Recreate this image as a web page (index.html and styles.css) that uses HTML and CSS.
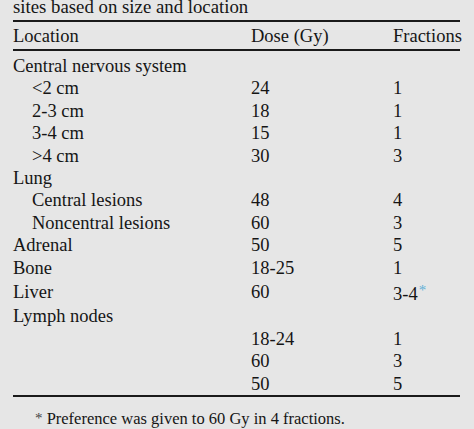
FILE: index.html
```html
<!DOCTYPE html>
<html>
<head>
<meta charset="utf-8">
<link rel="stylesheet" href="styles.css">
</head>
<body>
<div class="page">
  <div class="caption">sites based on size and location</div>
  <table class="tbl">
    <colgroup><col class="w1"><col class="w2"><col class="w3"></colgroup>
    <thead>
      <tr><th>Location</th><th>Dose (Gy)</th><th>Fractions</th></tr>
    </thead>
    <tbody>
      <tr class="first"><td>Central nervous system</td><td></td><td></td></tr>
      <tr><td class="ind">&lt;2 cm</td><td>24</td><td>1</td></tr>
      <tr><td class="ind">2-3 cm</td><td>18</td><td>1</td></tr>
      <tr><td class="ind">3-4 cm</td><td>15</td><td>1</td></tr>
      <tr><td class="ind">&gt;4 cm</td><td>30</td><td>3</td></tr>
      <tr><td>Lung</td><td></td><td></td></tr>
      <tr><td class="ind">Central lesions</td><td>48</td><td>4</td></tr>
      <tr><td class="ind">Noncentral lesions</td><td>60</td><td>3</td></tr>
      <tr><td>Adrenal</td><td>50</td><td>5</td></tr>
      <tr><td>Bone</td><td>18-25</td><td>1</td></tr>
      <tr><td>Liver</td><td>60</td><td>3-4<span class="star">*</span></td></tr>
      <tr><td>Lymph nodes</td><td></td><td></td></tr>
      <tr><td></td><td>18-24</td><td>1</td></tr>
      <tr><td></td><td>60</td><td>3</td></tr>
      <tr class="last"><td></td><td>50</td><td>5</td></tr>
    </tbody>
  </table>
  <div class="foot"><span class="fstar">*</span> Preference was given to 60 Gy in 4 fractions.</div>
</div>
</body>
</html>
```
FILE: styles.css
```css
html, body {
  margin: 0;
  padding: 0;
  background: #e6e6e6;
}
body {
  width: 474px;
  height: 429px;
  overflow: hidden;
  color: #151515;
}
.page, .caption, .tbl, .tbl th, .tbl td, .foot {
  font-family: "Liberation Serif", "Times New Roman", serif;
}
.page {
  padding: 0 14px 0 13px;
  font-size: 18.5px;
}
.caption {
  font-size: 18.8px;
  line-height: 18px;
  margin-top: -2px;
  height: 22px;
  white-space: nowrap;
}
.tbl {
  width: 447px;
  table-layout: fixed;
  border-collapse: collapse;
  border-top: 2px solid #1a1a1a;
  border-bottom: 2px solid #1a1a1a;
  font-size: 18.5px;
}
.w1 { width: 238px; }
.w2 { width: 142px; }
.w3 { width: 67px; }
.tbl th {
  font-weight: normal;
  text-align: left;
  padding: 4px 0 3px 0;
  height: 20px;
  line-height: 20px;
  font-size: 18.5px;
  border-bottom: 2px solid #1a1a1a;
  white-space: nowrap;
}
.tbl td {
  padding: 0;
  line-height: 22.4px;
  height: 22.4px;
  font-size: 18.5px;
  white-space: nowrap;
}
.tbl tr.first td { padding-top: 4px; }
.tbl tr.last td { padding-bottom: 0; }
.tbl td.ind { padding-left: 19px; }
.star {
  color: #62b0d6;
  font-size: 15px;
  vertical-align: 5px;
  margin-left: 1px;
}
.foot {
  font-size: 16.5px;
  padding: 12px 0 0 22px;
  line-height: 18px;
  white-space: nowrap;
}
.fstar {
  color: #444;
  font-size: 15px;
  vertical-align: 1px;
}
```
